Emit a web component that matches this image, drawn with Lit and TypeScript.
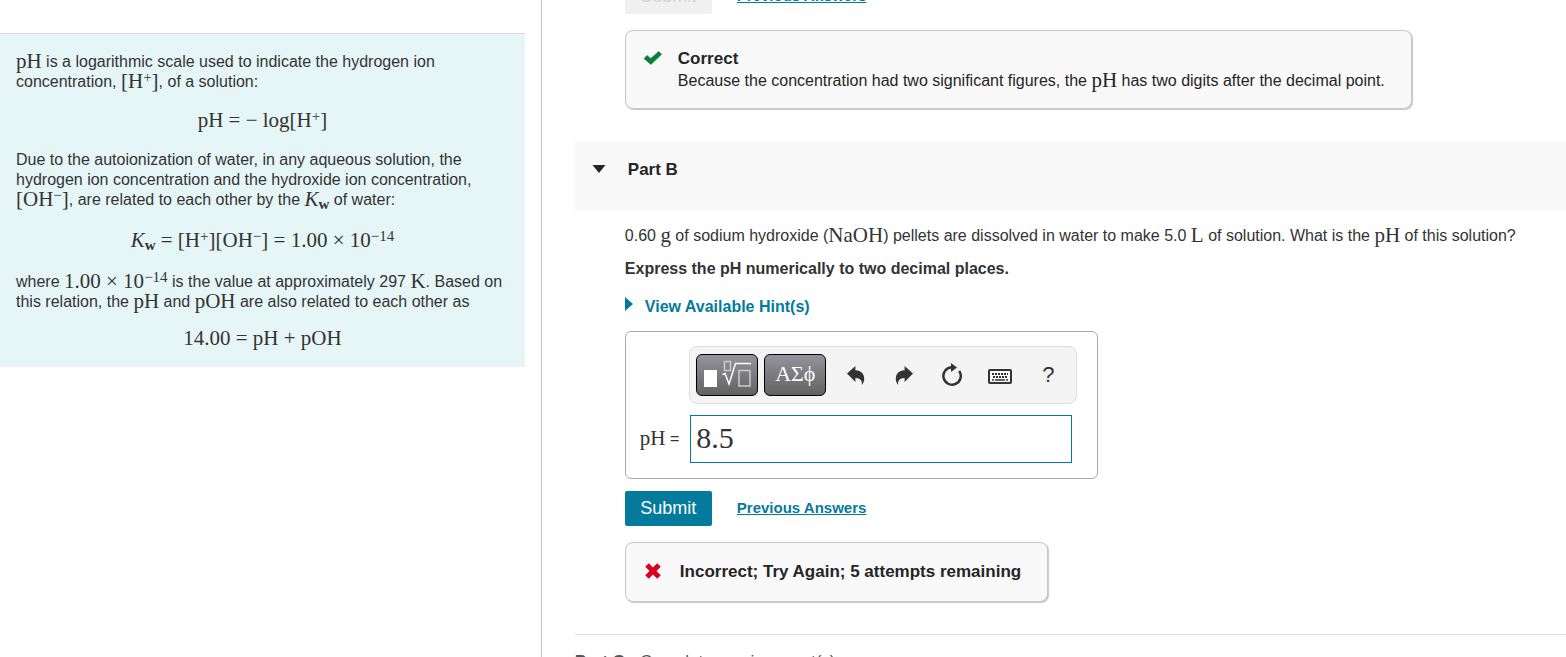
import { LitElement, html, css, svg } from "lit";
import { customElement, state } from "lit/decorators.js";

const sup = (s: string) => html`<sup class="sup">${s}</sup>`;
const m = (body: unknown) => html`<span class="math">${body}</span>`;
const kw = html`<i>K</i><sub class="sub">w</sub>`;
const hPlus = html`[H${sup("+")}]`;
const ohMinus = html`[OH${sup("−")}]`;
const tenPow = html`1.00 × 10${sup("−14")}`;

const undoPath = svg`<path d="M0 7.6 8.400 0v4.300c5.800.2 8.800 3.500 8.800 8.500 0 2.300-.8 4.400-2.300 6.200.4-4.400-1.300-7-6.500-7.100v4z" fill="#333"/>`;

@customElement("app-root")
export class AppRoot extends LitElement {
  @state() private answer = "8.5";

  static styles = css`
    :host {
      display: grid;
      grid-template-columns: 34.6% minmax(0, 1fr);
      height: 100vh;
      overflow: hidden;
      background: #fff;
      color: #333;
      font: 16px/20px "Liberation Sans", Arial, sans-serif;
    }
    * { box-sizing: border-box; }
    p, h2, h3 { margin: 0; }
    .side { border-right: 1px solid #c3c8cf; padding: 33px 16px 0 0; }
    .intro { background: #e6f6f7; border-top: 1px solid #d8dfe0; padding: 18px 16px; }
    .intro .eq { text-align: center; margin: 19px 0; }
    .intro .tall { margin: 21px 0; }
    .intro .last { margin: 17px 0 0; }
    .math { font-family: "Liberation Serif", "Times New Roman", serif; font-size: 21px; line-height: 18px; white-space: nowrap; vertical-align: -1px; display: inline-block; height: 18px; }
    .sup, .sub { font-size: 15px; line-height: 0; }
    .sub { font-weight: bold; vertical-align: -3px; }
    .sup { vertical-align: 6px; }

    .main { padding-left: 33px; min-width: 0; margin-top: -21px; }
    .body { padding-left: 50px; }
    .actions { display: flex; align-items: center; gap: 25px; height: 35px; }
    .entry + .actions { margin-top: 12px; }
    .submit { font: 18px/20px "Liberation Sans", Arial, sans-serif; width: 87px; height: 35px; padding: 0 0 2px; border: 0; border-radius: 2px; background: #047a9c; color: #fff; }
    .submit:disabled { background: #f0f0f0; color: #d5d5d5; }
    .prev { color: #047a9c; font-size: 15px; font-weight: bold; text-decoration: underline; text-decoration-skip-ink: none; text-underline-offset: 1px; margin-top: -2px; }
    .note { width: fit-content; margin-top: 16px; display: flex; border: 1px solid #c7c7c7; border-radius: 8px; background: #f9f9f9; box-shadow: 1px 1px 1px #c7c7c7; padding: 18px 26px 17px 18px; gap: 16px; color: #252525; }
    .note h3, .part h2 { font-size: 17px; font-weight: bold; color: #252525; line-height: 20px; }
    .note p { margin-top: 2px; }
    .note svg { flex: none; }
    .good svg { margin-top: 2px; }
    .bad { padding-top: 19px; padding-bottom: 19px; gap: 18px; }
    .part { display: flex; align-items: flex-start; gap: 22px; background: #f9f9f9; height: 70px; margin-top: 32px; padding: 19px 17px; }
    .part svg { margin-top: 5px; }
    .question { margin-top: 15px; }
    .express { font-weight: bold; margin-top: 13px; }
    .hint { display: flex; gap: 12px; margin: 18px 0 14px; padding: 0; border: 0; background: none; color: #047a9c; font: bold 16px/20px "Liberation Sans", Arial, sans-serif; }
    .entry { width: fit-content; display: grid; grid-template-columns: auto 388px; column-gap: 10px; row-gap: 11px; align-items: center; border: 1px solid #aaa; border-radius: 6px; padding: 14px 20px 15px 14px; }
    .tools { grid-column: 2; display: flex; align-items: center; border: 1px solid #ddd; border-radius: 8px; background: #f4f4f4; height: 58px; padding-left: 6px; }
    .tool { flex: none; width: 48px; height: 42px; border: 0; padding: 0; background: none; display: grid; place-items: center; color: #333; font: 22px/24px "Liberation Sans", Arial, sans-serif; }
    .dark { width: 62px; border: 1px solid #000; border-radius: 6px; background: linear-gradient(#95939d, #626262); color: #fff; font: 22px/24px "Liberation Serif", serif; padding-bottom: 3px; margin-right: 6px; }
    .field { width: 382px; height: 48px; margin-left: 1px; border: 1px solid #047a9c; background: #fff; padding: 0 5px 2px; color: #333; font: 30px/34px "Liberation Serif", serif; outline: none; }
    .next { margin-top: 32px; border-top: 1px solid #ddd; padding-top: 17px; display: flex; gap: 15px; font-size: 17px; color: #555; white-space: nowrap; }
  `;

  private onInput(e: Event) {
    this.answer = (e.target as HTMLInputElement).value;
  }

  render() {
    return html`
      <aside class="side">
        <div class="intro">
          <p>${m("pH")} is a logarithmic scale used to indicate the hydrogen ion concentration, ${m(hPlus)}, of a solution:</p>
          <p class="eq">${m(html`pH = − log${hPlus}`)}</p>
          <p>Due to the autoionization of water, in any aqueous solution, the hydrogen ion concentration and the hydroxide ion concentration, ${m(ohMinus)}, are related to each other by the ${m(kw)} of water:</p>
          <p class="eq tall">${m(html`${kw} = ${hPlus}${ohMinus} = ${tenPow}`)}</p>
          <p>where ${m(tenPow)} is the value at approximately 297 ${m("K")}. Based on this relation, the ${m("pH")} and ${m("pOH")} are also related to each other as</p>
          <p class="eq last">${m("14.00 = pH + pOH")}</p>
        </div>
      </aside>
      <main class="main">
        <div class="body">
          <div class="actions">
            <button class="submit" disabled>Submit</button>
            <a class="prev" href="#a">Previous Answers</a>
          </div>
          <div class="note good">
            <svg width="18" height="14" viewBox="0 0 18 14"><path d="M0 7.600 3 4.500 6.700 7.600 14.700.4 17.600 3.300 6.900 13.400z" fill="#038238" stroke="#038238" stroke-linejoin="round" stroke-width=".6"/></svg>
            <div>
              <h3>Correct</h3>
              <p>Because the concentration had two significant figures, the ${m("pH")} has two digits after the decimal point.</p>
            </div>
          </div>
        </div>
        <div class="part">
          <svg width="14" height="8" viewBox="0 0 14 8"><path d="M.5 0h13l-6.500 8z" fill="#252525"/></svg>
          <h2>Part B</h2>
        </div>
        <div class="body">
          <p class="question">0.60 ${m("g")} of sodium hydroxide (${m("NaOH")}) pellets are dissolved in water to make 5.0 ${m("L")} of solution. What is the ${m("pH")} of this solution?</p>
          <p class="express">Express the pH numerically to two decimal places.</p>
          <button class="hint"><svg width="8" height="14" viewBox="0 0 8 14"><path d="M0 0 8 7 0 14z" fill="#047a9c"/></svg>View Available Hint(s)</button>
          <div class="entry">
            <div class="tools">
              <button class="tool dark" aria-label="Templates">
                <svg width="48" height="28" viewBox="0 0 48 28" fill="none" stroke="#fff">
                  <path d="M1 10h13v17H1z" fill="#fff" stroke="none"/>
                  <path d="M21.500 1.500h6v9h-6z" stroke="#ccc" stroke-width="1.500"/>
                  <path d="M19.500 14.500l2.500-1 4 10.500 6.500-20.500H48" stroke-width="1.500"/>
                  <path d="M36 10.500h11v15.500H36z" stroke="#ccc" stroke-width="1.500"/>
                </svg>
              </button>
              <button class="tool dark">ΑΣϕ</button>
              <button class="tool" aria-label="Undo"><svg width="18" height="19" viewBox="0 0 18 19">${undoPath}</svg></button>
              <button class="tool" aria-label="Redo"><svg width="18" height="19" viewBox="0 0 18 19"><g transform="translate(18 0) scale(-1 1)">${undoPath}</g></svg></button>
              <button class="tool" aria-label="Reset"><svg width="22" height="24" viewBox="0 0 22 24"><path d="M11 4.300A8.700 8.700 0 1 0 18.200 8" fill="none" stroke="#333" stroke-width="2.500"/><path d="M10 0l6 4.500-6 4.500z" fill="#333"/></svg></button>
              <button class="tool" aria-label="Keyboard"><svg width="24" height="18" viewBox="0 0 24 18"><rect x="1" y="4" width="22" height="13" rx="1" fill="#fff" stroke="#333" stroke-width="2"/><path d="M4 8h16M5 11h15" stroke="#333" stroke-width="2" stroke-dasharray="2 1"/><path d="M4 14h2m1 0h10m1 0h2" stroke="#333" stroke-width="1.500"/></svg></button>
              <button class="tool" aria-label="Help">?</button>
            </div>
            <label for="ans">${m("pH")} =</label>
            <input id="ans" class="field" .value=${this.answer} @input=${this.onInput} />
          </div>
          <div class="actions">
            <button class="submit">Submit</button>
            <a class="prev" href="#b">Previous Answers</a>
          </div>
          <div class="note bad">
            <svg width="18" height="18" viewBox="0 0 18 18"><path d="M3 3l12 12M15 3 3 15" stroke="#db0020" stroke-width="5"/></svg>
            <h3>Incorrect; Try Again; 5 attempts remaining</h3>
          </div>
        </div>
        <div class="next"><b>Part C</b><span>Complete previous part(s)</span></div>
      </main>
    `;
  }
}
